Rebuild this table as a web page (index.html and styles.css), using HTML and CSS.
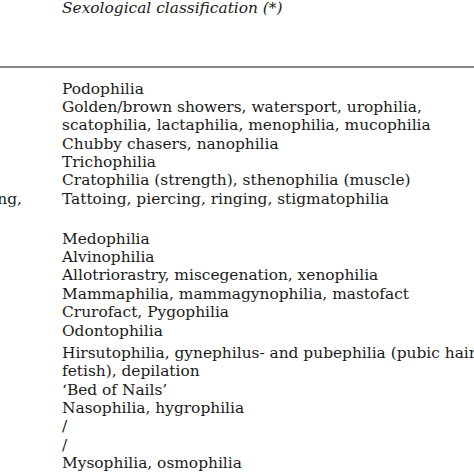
FILE: index.html
```html
<!DOCTYPE html>
<html>
<head>
<meta charset="utf-8">
<link rel="stylesheet" href="styles.css">
</head>
<body>
<div class="sheet">
  <div class="row head">
    <div class="lcell"></div>
    <div class="rcell title">Sexological classification (*)</div>
  </div>
  <div class="rule"></div>
  <div class="rows">
    <div class="row first"><div class="lcell"></div><div class="rcell">Podophilia</div></div>
    <div class="row"><div class="lcell"></div><div class="rcell">Golden/brown showers, watersport, urophilia,<br>scatophilia, lactaphilia, menophilia, mucophilia</div></div>
    <div class="row"><div class="lcell"></div><div class="rcell">Chubby chasers, nanophilia</div></div>
    <div class="row"><div class="lcell"></div><div class="rcell">Trichophilia</div></div>
    <div class="row"><div class="lcell"></div><div class="rcell">Cratophilia (strength), sthenophilia (muscle)</div></div>
    <div class="row"><div class="lcell"><span>Piercing,</span></div><div class="rcell">Tattoing, piercing, ringing, stigmatophilia</div></div>
    <div class="row gap-lg"><div class="lcell"></div><div class="rcell">Medophilia</div></div>
    <div class="row"><div class="lcell"></div><div class="rcell">Alvinophilia</div></div>
    <div class="row"><div class="lcell"></div><div class="rcell">Allotriorastry, miscegenation, xenophilia</div></div>
    <div class="row"><div class="lcell"></div><div class="rcell">Mammaphilia, mammagynophilia, mastofact</div></div>
    <div class="row"><div class="lcell"></div><div class="rcell">Crurofact, Pygophilia</div></div>
    <div class="row"><div class="lcell"></div><div class="rcell">Odontophilia</div></div>
    <div class="row gap-sm"><div class="lcell"></div><div class="rcell">Hirsutophilia, gynephilus- and pubephilia (pubic hair<br>fetish), depilation</div></div>
    <div class="row"><div class="lcell"></div><div class="rcell">‘Bed of Nails’</div></div>
    <div class="row"><div class="lcell"></div><div class="rcell">Nasophilia, hygrophilia</div></div>
    <div class="row"><div class="lcell"></div><div class="rcell">/</div></div>
    <div class="row"><div class="lcell"></div><div class="rcell">/</div></div>
    <div class="row"><div class="lcell"></div><div class="rcell">Mysophilia, osmophilia</div></div>
  </div>
</div>
</body>
</html>
```

FILE: styles.css
```css
html, body {
  margin: 0;
  padding: 0;
  background: #ffffff;
  overflow: hidden;
}

.sheet {
  margin-top: -1px;
  font-family: "DejaVu Serif", "Liberation Serif", serif;
  font-size: 15.4px;
  line-height: 18.35px;
  color: #1a1a1a;
}

.row {
  display: grid;
  grid-template-columns: 62px 500px;
}

.lcell {
  display: flex;
  justify-content: flex-end;
  padding-right: 40px;
  white-space: nowrap;
  overflow: hidden;
}

.rcell {
  white-space: nowrap;
}

.title {
  font-style: italic;
}

.rule {
  margin-top: 49px;
  height: 2px;
  background: #8a8a8a;
}

.rows {
  margin-top: 11.4px;
}

.gap-lg {
  margin-top: 21.65px;
}

.gap-sm {
  margin-top: 4px;
}
```
